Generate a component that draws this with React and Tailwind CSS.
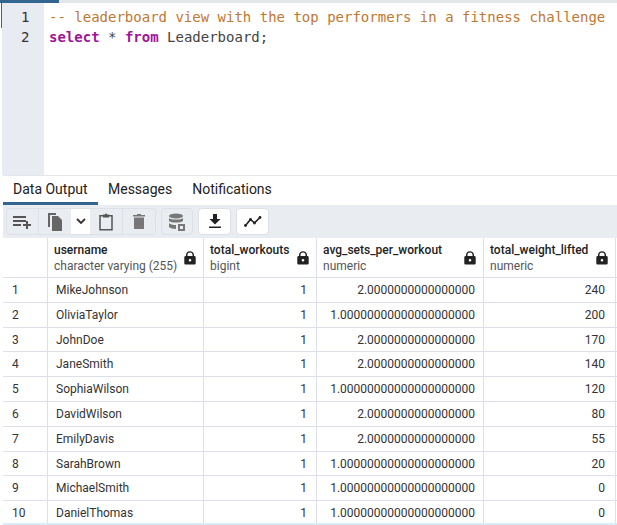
import React from "react";

const rows = [
  ["MikeJohnson", "2.0000000000000000", "240"],
  ["OliviaTaylor", "1.00000000000000000000", "200"],
  ["JohnDoe", "2.0000000000000000", "170"],
  ["JaneSmith", "2.0000000000000000", "140"],
  ["SophiaWilson", "1.00000000000000000000", "120"],
  ["DavidWilson", "2.0000000000000000", "80"],
  ["EmilyDavis", "2.0000000000000000", "55"],
  ["SarahBrown", "1.00000000000000000000", "20"],
  ["MichaelSmith", "1.00000000000000000000", "0"],
  ["DanielThomas", "1.00000000000000000000", "0"],
];

const columns = [
  { name: "username", type: "character varying (255)", width: "w-[156px]" },
  { name: "total_workouts", type: "bigint", width: "w-[113px]" },
  { name: "avg_sets_per_workout", type: "numeric", width: "w-[167px]" },
  { name: "total_weight_lifted", type: "numeric", width: "w-[132px]" },
];

const Lock = () => (
  <svg width="12" height="14" viewBox="0 0 12 14" className="shrink-0">
    <path
      fill="#222"
      fillRule="evenodd"
      d="M2 5V3.800C2 1.700 3.800 0.200 6 0.200s4 1.500 4 3.600V5h.4c.7 0 1.300.6 1.300 1.300v6c0 .7-.6 1.300-1.300 1.300H1.600C.9 13.600.3 13 .3 12.300v-6C.3 5.600.9 5 1.600 5H2zm1.500 0h5V3.800C8.500 2.500 7.400 1.600 6 1.600s-2.500.9-2.500 2.200V5zM6 8a1.300 1.300 0 100 2.600A1.300 1.300 0 006 8z"
    />
  </svg>
);

const ToolBtn = ({ children, className = "" }) => (
  <div className={`h-full flex items-center justify-center ${className}`}>{children}</div>
);

const Toolbar = () => (
  <div className="h-[33px] bg-[#e9ecf0] flex items-center pl-[3px] gap-[5px]">
    <div className="flex h-[27px] rounded-[4px] border border-[#dde0e6] overflow-hidden">
      <ToolBtn className="w-[32px] border-r border-[#dde0e6]">
        <svg width="20" height="14" viewBox="0 0 20 14">
          <path fill="#555" d="M0 1h13v2H0zM0 5h13v2H0zM0 9h8v2H0zM13 6h2v3h3v2h-3v3h-2v-3h-3V9h3z" />
        </svg>
      </ToolBtn>
      <ToolBtn className="w-[32px]">
        <svg width="16" height="18" viewBox="0 0 16 18">
          <path fill="#666" d="M1 0h8v2H3v12H1z" />
          <path fill="#666" d="M5 3h6l4 4v11H5z" />
        </svg>
      </ToolBtn>
      <ToolBtn className="w-[19px] bg-white">
        <svg width="10" height="7" viewBox="0 0 10 7">
          <path fill="none" stroke="#333" strokeWidth="1.800" d="M1 1l4 4 4-4" />
        </svg>
      </ToolBtn>
      <ToolBtn className="w-[33px] border-r border-[#dde0e6]">
        <svg width="14" height="18" viewBox="0 0 14 18">
          <path fill="none" stroke="#555" strokeWidth="1.500" d="M4 2.800H1v14h12v-14h-3" />
          <path fill="#555" d="M4 1.500h2c0-1.500 2-1.500 2 0h2v3H4z" />
        </svg>
      </ToolBtn>
      <ToolBtn className="w-[32px]">
        <svg width="12" height="15" viewBox="0 0 12 15">
          <path fill="#777" d="M0 1h12v1.500H0zM4 0h4v1H4zM1 3.500h10V15H1z" />
        </svg>
      </ToolBtn>
    </div>
    <div className="h-[27px] w-[32px] rounded-[4px] border border-[#dde0e6] flex items-center justify-center">
      <svg width="16" height="18" viewBox="0 0 16 18">
        <ellipse cx="7" cy="3" rx="7" ry="2.500" fill="#777" />
        <path fill="#777" d="M0 5c2 2 12 2 14 0v3c-2 2-12 2-14 0zM0 10c2 2 6 2 7 2v4c-3 0-6-1-7-2z" />
        <path fill="#777" d="M9 11h7v7H9z" />
        <path fill="#e9ecf0" d="M11 13h3v3h-3z" />
      </svg>
    </div>
    <div className="h-[27px] w-[33px] rounded-[4px] border border-[#dde0e6] bg-white flex items-center justify-center">
      <svg width="12" height="15" viewBox="0 0 12 15">
        <path fill="#222" d="M4 0h4v5h3.500L6 10.500.5 5H4zM0 12.500h12V14H0z" />
      </svg>
    </div>
    <div className="h-[27px] w-[33px] rounded-[4px] border border-[#dde0e6] bg-white flex items-center justify-center">
      <svg width="18" height="11" viewBox="0 0 18 11">
        <path fill="none" stroke="#222" strokeWidth="1.600" d="M1.500 9.500l5-6 4 3.500 5.500-5.500" />
        <circle cx="1.500" cy="9.500" r="1.400" fill="#222" />
        <circle cx="6.500" cy="3.500" r="1.400" fill="#222" />
        <circle cx="10.500" cy="7" r="1.400" fill="#222" />
        <circle cx="16" cy="1.500" r="1.400" fill="#222" />
      </svg>
    </div>
  </div>
);

export default function App() {
  return (
    <div className="w-[617px] h-[525px] overflow-hidden bg-white font-['Roboto',sans-serif] relative">
      {/* Editor */}
      <div className="h-[175px] flex border-t-[3px] border-[#e4e6ea] pl-[2px] relative">
        <div className="absolute left-0 -top-[3px] w-[59px] h-[3px] bg-[#326690]" />
        <div className="absolute left-[1px] top-0 w-[1px] h-[25px] bg-[#326690]" />
        <div className="w-[42px] bg-[#e8ebf1] font-['DejaVu_Sans_Mono',monospace] text-[14px] leading-[20px] text-[#333] pt-[4px]">
          <div className="pl-[19px]">1</div>
          <div className="pl-[19px]">2</div>
        </div>
        <div className="pl-[5px] pt-[4px] font-['DejaVu_Sans_Mono',monospace] text-[14px] leading-[20px] whitespace-pre text-[#444]">
          <div className="text-[#bf7832]">-- leaderboard view with the top performers in a fitness challenge</div>
          <div>
            <span className="text-[#a0149a] font-bold">select</span> * <span className="text-[#a0149a] font-bold">from</span> Leaderboard;
          </div>
        </div>
      </div>

      {/* Tabs */}
      <div className="h-[30px] border-t border-[#e4e6ea] ml-[3px] flex text-[14px] text-[#222] leading-[26px]">
        <div className="w-[95px] pl-[10px] h-[29px] border-b-[3px] border-[#326690]">Data Output</div>
        <div className="ml-[10px]">Messages</div>
        <div className="ml-[20px]">Notifications</div>
      </div>
      <div className="ml-[3px]">
        <Toolbar />
      </div>

      {/* Result grid */}
      <div className="ml-[3px] text-[12px] text-[#222]">
        <div className="flex h-[40px] border-b border-[#dde0e8]">
          <div className="w-[45px] border-r border-[#dde0e8]" />
          {columns.map((c) => (
            <div key={c.name} className={`${c.width} border-r border-[#dde0e8] flex items-center justify-between pl-[6px] pr-[7px]`}>
              <div className="leading-[16px]">
                <div className="font-medium text-[#222]">{c.name}</div>
                <div className="text-[#555]">{c.type}</div>
              </div>
              <Lock />
            </div>
          ))}
        </div>
        {rows.map((r, i) => (
          <div key={r[0]} className="flex h-[24.800px] border-b border-[#dde0e8] items-stretch text-[#333] leading-[24px]">
            <div className="w-[45px] border-r border-[#dde0e8] pl-[9px]">{i + 1}</div>
            <div className="w-[156px] border-r border-[#dde0e8] pl-[8px]">{r[0]}</div>
            <div className="w-[113px] border-r border-[#dde0e8] text-right pr-[9px]">1</div>
            <div className="w-[167px] border-r border-[#dde0e8] text-right pr-[8px]">{r[1]}</div>
            <div className="w-[132px] border-r border-[#dde0e8] text-right pr-[10px]">{r[2]}</div>
          </div>
        ))}
      </div>

      {/* Cropped window edge below the grid */}
      <div className="absolute left-[3px] right-0 bottom-0 h-[2px] bg-[#d9edf5]" />
    </div>
  );
}
